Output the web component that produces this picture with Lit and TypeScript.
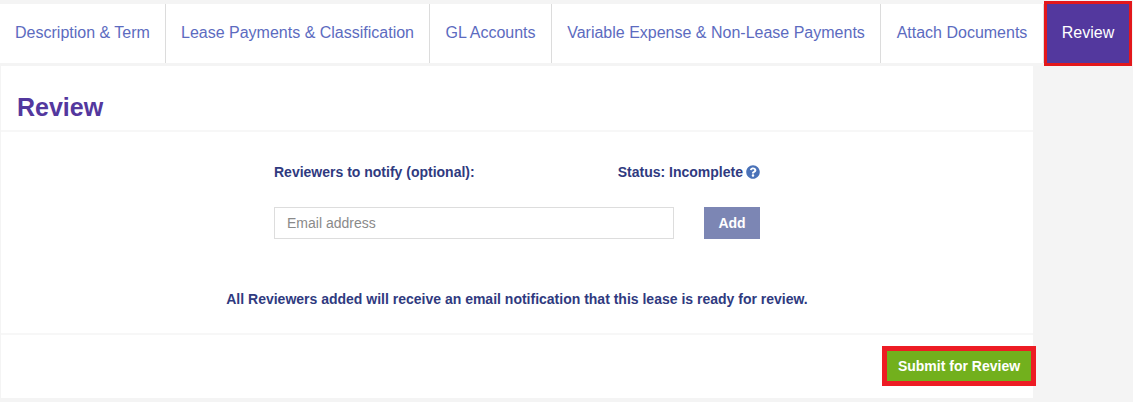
import { LitElement, html, css } from "lit";
import { customElement } from "lit/decorators.js";

const TABS = [
  { label: "Description & Term", width: 166 },
  { label: "Lease Payments & Classification", width: 264 },
  { label: "GL Accounts", width: 122 },
  { label: "Variable Expense & Non-Lease Payments", width: 329 },
  { label: "Attach Documents", width: 163 },
];

@customElement("app-root")
export class AppRoot extends LitElement {
  static styles = css`
    :host {
      display: block;
      width: 1133px;
      height: 402px;
      box-sizing: border-box;
      padding-top: 4px;
      background: #f4f4f4;
      font-family: "Liberation Sans", Arial, sans-serif;
      overflow: hidden;
    }
    .tabs {
      display: flex;
      height: 59px;
    }
    .tab {
      box-sizing: border-box;
      height: 59px;
      padding-bottom: 2px;
      display: flex;
      align-items: center;
      justify-content: center;
      background: #fff;
      border-right: 1px solid #dcdcdc;
      color: #5c6bc0;
      font-size: 16px;
      white-space: nowrap;
    }
    .tab.active {
      position: relative;
      flex: 0 0 83px;
      margin-left: 3px;
      background: #53389e;
      border-right: 1px solid #fff;
      color: #fff;
    }
    .tab.active::after {
      content: "";
      position: absolute;
      inset: -3px;
      border: 3px solid #e3171b;
      pointer-events: none;
    }
    .card {
      box-sizing: border-box;
      width: 1032px;
      height: 332px;
      margin: 3px 0 0 1px;
      background: #fff;
      display: flex;
      flex-direction: column;
    }
    .head {
      box-sizing: border-box;
      height: 66px;
      padding: 27px 0 0 16px;
      border-bottom: 2px solid #f7f7f7;
    }
    h2 {
      margin: 0;
      color: #53389e;
      font-size: 25px;
      line-height: 28px;
      font-weight: 700;
    }
    .body {
      box-sizing: border-box;
      height: 203px;
      border-bottom: 2px solid #f7f7f7;
      display: flex;
      flex-direction: column;
      align-items: center;
      color: #2f3a80;
      font-size: 14px;
      font-weight: 700;
    }
    .block {
      width: 486px;
      padding-top: 31px;
    }
    .row {
      display: flex;
      justify-content: space-between;
      align-items: center;
      height: 18px;
      white-space: nowrap;
    }
    .status {
      display: flex;
      align-items: center;
      gap: 3px;
    }
    .status svg {
      display: block;
      width: 14px;
      height: 14px;
      fill: #4a72b8;
    }
    .form {
      display: flex;
      justify-content: space-between;
      margin-top: 26px;
    }
    input {
      box-sizing: border-box;
      width: 400px;
      height: 32px;
      padding: 0 12px 1px;
      border: 1px solid #dddddd;
      background: #fff;
      font: 14px "Liberation Sans", Arial, sans-serif;
      outline: none;
    }
    input::placeholder {
      color: #8a8a8a;
      opacity: 1;
    }
    .add {
      width: 56px;
      height: 32px;
      border: 0;
      padding: 0;
      background: #7c86b4;
      color: #fff;
      font: 700 14px "Liberation Sans", Arial, sans-serif;
    }
    .note {
      margin: 52px 0 0;
      line-height: 16px;
      text-align: center;
    }
    .foot {
      flex: 1;
      display: flex;
      justify-content: flex-end;
      align-items: flex-start;
      padding: 16px 2px 0 0;
    }
    .submit {
      position: relative;
      width: 144px;
      height: 30px;
      border: 0;
      padding: 0;
      background: #72b01d;
      color: #fff;
      font: 700 14px "Liberation Sans", Arial, sans-serif;
    }
    .submit::after {
      content: "";
      position: absolute;
      inset: -5px;
      border: 5px solid #ed1c24;
      pointer-events: none;
    }
  `;

  render() {
    return html`
      <nav class="tabs">
        ${TABS.map(
          (t) => html`<div class="tab" style="flex: 0 0 ${t.width}px">${t.label}</div>`
        )}
        <div class="tab active">Review</div>
      </nav>
      <section class="card">
        <header class="head"><h2>Review</h2></header>
        <div class="body">
          <div class="block">
            <div class="row">
              <span>Reviewers to notify (optional):</span>
              <span class="status">
                Status: Incomplete
                <svg viewBox="0 0 512 512" aria-hidden="true">
                  <path
                    d="M504 256c0 136.997-111.043 248-248 248S8 392.997 8 256C8 119.083 119.043 8 256 8s248 111.083 248 248zM262.655 90c-54.497 0-89.255 22.957-116.549 63.758-3.536 5.286-2.353 12.415 2.715 16.258l34.699 26.31c5.205 3.947 12.621 3.008 16.665-2.122 17.864-22.658 30.113-35.797 57.303-35.797 20.429 0 45.698 13.148 45.698 32.958 0 14.976-12.363 22.667-32.534 33.976C247.128 238.528 216 254.941 216 296v4c0 6.627 5.373 12 12 12h56c6.627 0 12-5.373 12-12v-1.333c0-28.462 83.186-29.647 83.186-106.667 0-58.002-60.165-102-116.531-102zM256 338c-25.365 0-46 20.635-46 46 0 25.364 20.635 46 46 46s46-20.636 46-46c0-25.365-20.635-46-46-46z"
                  ></path>
                </svg>
              </span>
            </div>
            <div class="form">
              <input type="text" placeholder="Email address" />
              <button class="add">Add</button>
            </div>
          </div>
          <p class="note">All Reviewers added will receive an email notification that this lease is ready for review.</p>
        </div>
        <footer class="foot"><button class="submit">Submit for Review</button></footer>
      </section>
    `;
  }
}
